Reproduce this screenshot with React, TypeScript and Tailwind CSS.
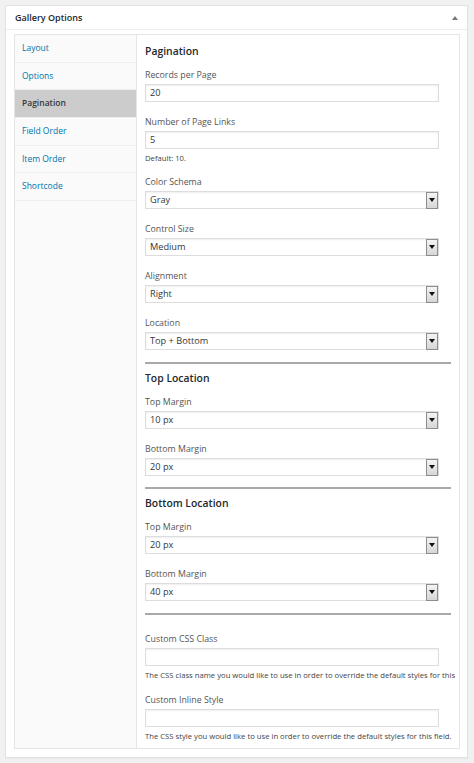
import React from 'react';

type FieldProps = {
  label: string;
  value?: string;
  select?: boolean;
  desc?: string;
  className?: string;
};

const tabs = ['Layout', 'Options', 'Pagination', 'Field Order', 'Item Order', 'Shortcode'];

const SelectArrow = () => (
  <span className="flex h-[17px] w-[12px] shrink-0 items-center justify-center border border-[#8e8e8e] bg-gradient-to-b from-[#f4f4f4] to-[#d6d6d6]">
    <svg width="6" height="4" viewBox="0 0 6 4">
      <polygon points="0,0 6,0 3,4" fill="#111" />
    </svg>
  </span>
);

const Field = ({ label, value = '', select, desc, className = 'mb-[14px]' }: FieldProps) => (
  <div className={className}>
    <label className="block text-[8.8px] leading-[12px] text-[#555]">{label}</label>
    <div className="mt-[3px] flex h-[18px] w-[294px] items-center justify-between border border-[#dddddd] bg-white pl-[4px] text-[9.2px] text-[#32373c] shadow-[inset_0_1px_2px_rgba(0,0,0,0.07)]">
      <span>{value}</span>
      {select && <SelectArrow />}
    </div>
    {desc && <p className="mt-[4px] whitespace-nowrap text-[7.7px] leading-[11px] text-[#444]">{desc}</p>}
  </div>
);

const Heading = ({ children, className = '' }: { children: React.ReactNode; className?: string }) => (
  <h3 className={`text-[10.4px] font-semibold leading-[16px] text-[#23282d] ${className}`}>{children}</h3>
);

const Divider = ({ className = '' }: { className?: string }) => (
  <hr className={`mr-[8px] h-[2px] border-0 bg-[#a9a9a9] ${className}`} />
);

export default function App() {
  return (
    <div className="min-h-[763px] bg-[#f1f1f1] p-[5px] font-['Open_Sans','Noto_Sans',sans-serif]">
      <div className="w-[463px] border border-[#e2e2e2] bg-white shadow-[0_1px_1px_rgba(0,0,0,0.04)]">
        <div className="flex h-[24px] items-center justify-between border-b border-[#eeeeee] pl-[9px] pr-[9px]">
          <span className="text-[9px] font-semibold text-[#23282d]">Gallery Options</span>
          <svg width="6" height="4" viewBox="0 0 6 4">
            <polygon points="0,4 6,4 3,0" fill="#777" />
          </svg>
        </div>
        <div className="pb-[8px] pl-[8px] pr-[7px] pt-[4px]">
          <div className="flex border border-[#e5e5e5]">
            <nav className="w-[122px] shrink-0 border-r border-[#e5e5e5] bg-[#fafafa]">
              {tabs.map(t => (
                <div
                  key={t}
                  className={
                    t === 'Pagination'
                      ? 'flex h-[27.7px] items-center border-b border-[#eeeeee] bg-[#cccccc] pl-[7px] text-[8.5px] font-semibold text-[#32373c]'
                      : 'flex h-[27.7px] items-center border-b border-[#eeeeee] pl-[7px] text-[8.5px] text-[#0073aa]'
                  }
                >
                  {t}
                </div>
              ))}
            </nav>
            <div className="min-w-0 flex-1 overflow-hidden bg-white pb-[6px] pl-[8px] pt-[8px]">
              <Heading className="mb-[10px]">Pagination</Heading>
              <Field label="Records per Page" value="20" />
              <Field label="Number of Page Links" value="5" desc="Default: 10." className="mb-[12px]" />
              <Field label="Color Schema" value="Gray" select />
              <Field label="Control Size" value="Medium" select />
              <Field label="Alignment" value="Right" select />
              <Field label="Location" value="Top + Bottom" select className="" />
              <Divider className="mt-[12px]" />
              <Heading className="mb-[10px] mt-[6px]">Top Location</Heading>
              <Field label="Top Margin" value="10 px" select />
              <Field label="Bottom Margin" value="20 px" select className="" />
              <Divider className="mt-[11px]" />
              <Heading className="mb-[10px] mt-[6px]">Bottom Location</Heading>
              <Field label="Top Margin" value="20 px" select />
              <Field label="Bottom Margin" value="40 px" select className="" />
              <Divider className="mt-[12px] mr-[5px]" />
              <Field
                label="Custom CSS Class"
                desc="The CSS class name you would like to use in order to override the default styles for this"
                className="mb-[13px] mt-[18px]"
              />
              <Field
                label="Custom Inline Style"
                desc="The CSS style you would like to use in order to override the default styles for this field."
                className=""
              />
            </div>
          </div>
        </div>
      </div>
    </div>
  );
}
